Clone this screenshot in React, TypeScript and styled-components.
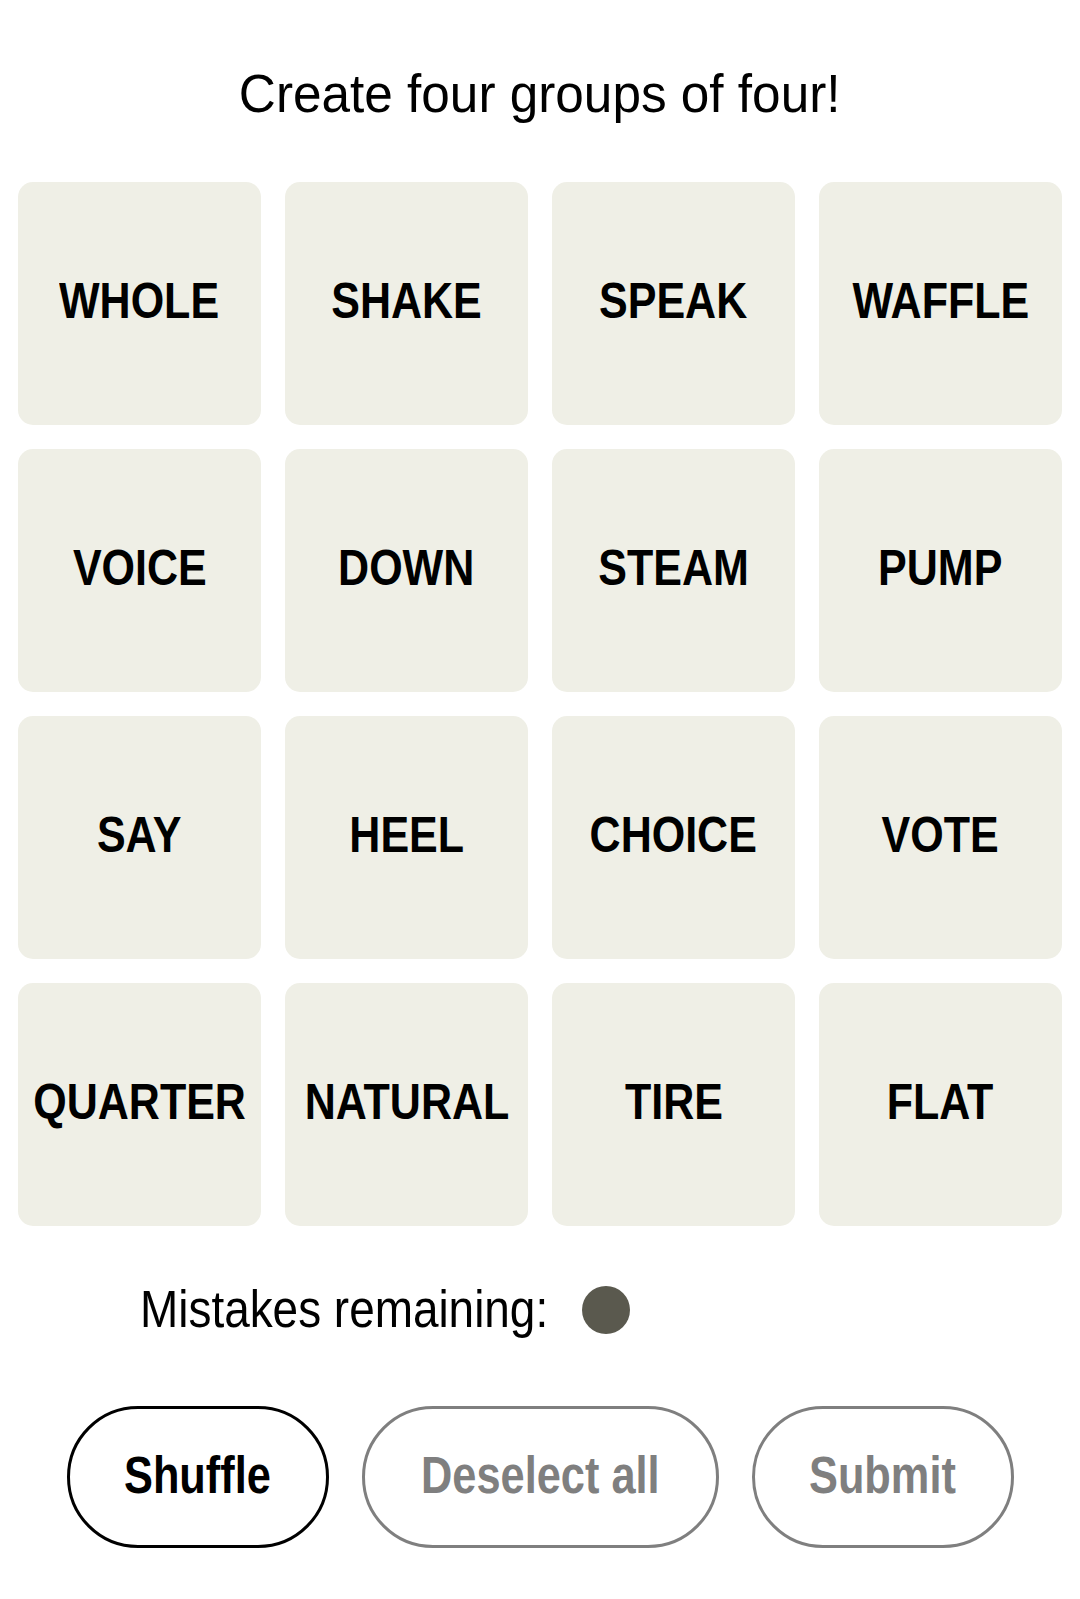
import React from "react";
import styled, { createGlobalStyle } from "styled-components";

const GlobalStyle = createGlobalStyle`
  html, body {
    margin: 0;
    padding: 0;
    background: #ffffff;
  }
  body {
    font-family: "Liberation Sans", Arial, sans-serif;
    color: #000000;
  }
`;

const Page = styled.div`
  width: 1080px;
  min-height: 1599px;
  box-sizing: border-box;
  padding: 61px 18px 0;
  display: flex;
  flex-direction: column;
  align-items: stretch;
`;

const Condensed = styled.span<{ $scale: number; $origin?: string }>`
  display: inline-block;
  white-space: nowrap;
  transform: scaleX(${(p) => p.$scale});
  transform-origin: ${(p) => p.$origin ?? "center"};
`;

const Header = styled.h1`
  margin: 0;
  height: 64px;
  font-size: 54px;
  line-height: 64px;
  font-weight: 400;
  text-align: center;
  color: #000;
`;

const Grid = styled.div`
  margin-top: 57px;
  display: grid;
  grid-template-columns: repeat(4, 243px);
  grid-auto-rows: 243px;
  gap: 24px;
`;

const Tile = styled.button`
  border: none;
  margin: 0;
  padding: 0 0 6px;
  background: #efefe6;
  border-radius: 15px;
  display: flex;
  align-items: center;
  justify-content: center;
  font-family: "Liberation Sans", Arial, sans-serif;
  font-weight: 700;
  font-size: 50px;
  text-transform: uppercase;
  color: #000;
  cursor: pointer;
  overflow: visible;
`;

const MistakesRow = styled.div`
  margin-top: 60px;
  height: 48px;
  display: flex;
  align-items: center;
  padding-left: 122px;
`;

const MistakesText = styled.div`
  width: 408px;
  font-size: 51px;
  line-height: 48px;
  color: #000;
`;

const Dots = styled.div`
  margin-left: 34px;
  display: flex;
  gap: 30px;
`;

const Dot = styled.span<{ $used?: boolean }>`
  width: 48px;
  height: 48px;
  border-radius: 50%;
  background: #5a594e;
  visibility: ${(p) => (p.$used ? "hidden" : "visible")};
`;

const Actions = styled.div`
  margin-top: 72px;
  display: flex;
  justify-content: center;
  gap: 33px;
`;

const PillButton = styled.button<{ $width: number; $active?: boolean }>`
  box-sizing: border-box;
  width: ${(p) => p.$width}px;
  height: 142px;
  border-radius: 71px;
  border: 3px solid ${(p) => (p.$active ? "#000000" : "#7f7f7f")};
  background: #ffffff;
  color: ${(p) => (p.$active ? "#000000" : "#7f7f7f")};
  font-family: "Liberation Sans", Arial, sans-serif;
  font-weight: 700;
  font-size: 51px;
  padding: 0 0 4px;
  display: flex;
  align-items: center;
  justify-content: center;
  cursor: pointer;
`;

const words = [
  "WHOLE", "SHAKE", "SPEAK", "WAFFLE",
  "VOICE", "DOWN", "STEAM", "PUMP",
  "SAY", "HEEL", "CHOICE", "VOTE",
  "QUARTER", "NATURAL", "TIRE", "FLAT",
];

export default function App() {
  return (
    <>
      <GlobalStyle />
      <Page>
        <Header>
          <Condensed $scale={0.95}>Create four groups of four!</Condensed>
        </Header>
        <Grid>
          {words.map((w) => (
            <Tile key={w}>
              <Condensed $scale={0.86}>{w}</Condensed>
            </Tile>
          ))}
        </Grid>
        <MistakesRow>
          <MistakesText>
            <Condensed $scale={0.9} $origin="left">Mistakes remaining:</Condensed>
          </MistakesText>
          <Dots>
            <Dot />
            <Dot $used />
            <Dot $used />
            <Dot $used />
          </Dots>
        </MistakesRow>
        <Actions>
          <PillButton $width={262} $active>
            <Condensed $scale={0.85}>Shuffle</Condensed>
          </PillButton>
          <PillButton $width={357}>
            <Condensed $scale={0.85}>Deselect all</Condensed>
          </PillButton>
          <PillButton $width={262}>
            <Condensed $scale={0.85}>Submit</Condensed>
          </PillButton>
        </Actions>
      </Page>
    </>
  );
}
